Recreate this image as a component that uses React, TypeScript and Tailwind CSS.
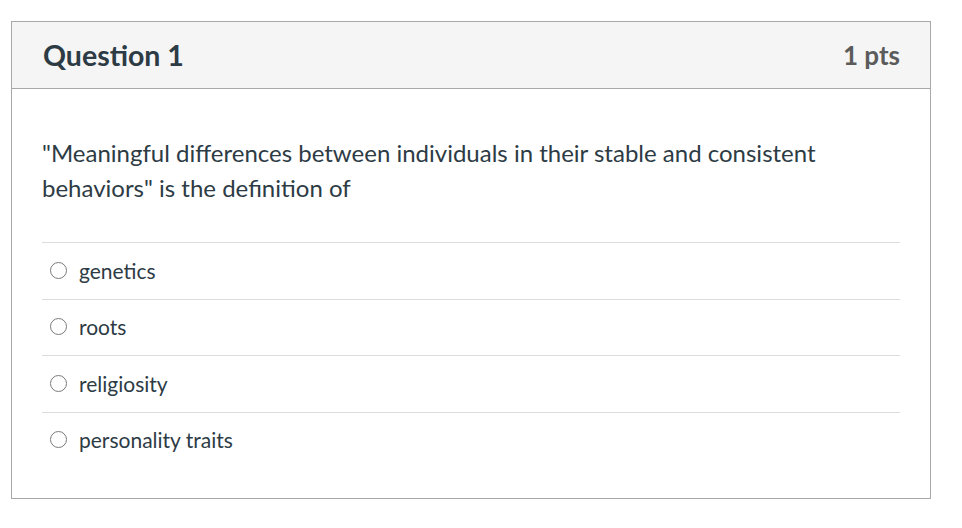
const answers = ['genetics', 'roots', 'religiosity', 'personality traits']

function Radio() {
  return (
    <span className="mr-[12px] inline-block h-[17px] w-[17px] shrink-0 rounded-full border-[1.5px] border-[#7a7a7a] bg-white" />
  )
}

export default function App() {
  return (
    <div className="min-h-[528px] bg-white pl-[11px] pt-[21px] font-['Lato',sans-serif]">
      <div className="w-[920px] border border-[#a8a8a8] bg-white">
        <div className="flex h-[67px] items-center justify-between border-b border-[#a8a8a8] bg-[#f5f5f5] pl-[31px] pr-[30px]">
          <h2 className="text-[28.5px] font-bold text-[#2d3b45]">Question 1</h2>
          <span className="text-[26px] font-bold text-[#5b5b5b]">1 pts</span>
        </div>
        <div className="px-[30px] pb-[30px] pt-[46px]">
          <p className="mb-[37px] text-[24px] leading-[35px] text-[#2d3b45]">
            "Meaningful differences between individuals in their stable and consistent behaviors" is the definition of
          </p>
          <ul>
            {answers.map((a) => (
              <li
                key={a}
                className="flex h-[56.5px] items-center border-t border-[#dcdcdc] pb-[1px] pl-[8px] text-[21px] text-[#2d3b45]"
              >
                <Radio />
                {a}
              </li>
            ))}
          </ul>
        </div>
      </div>
    </div>
  )
}
